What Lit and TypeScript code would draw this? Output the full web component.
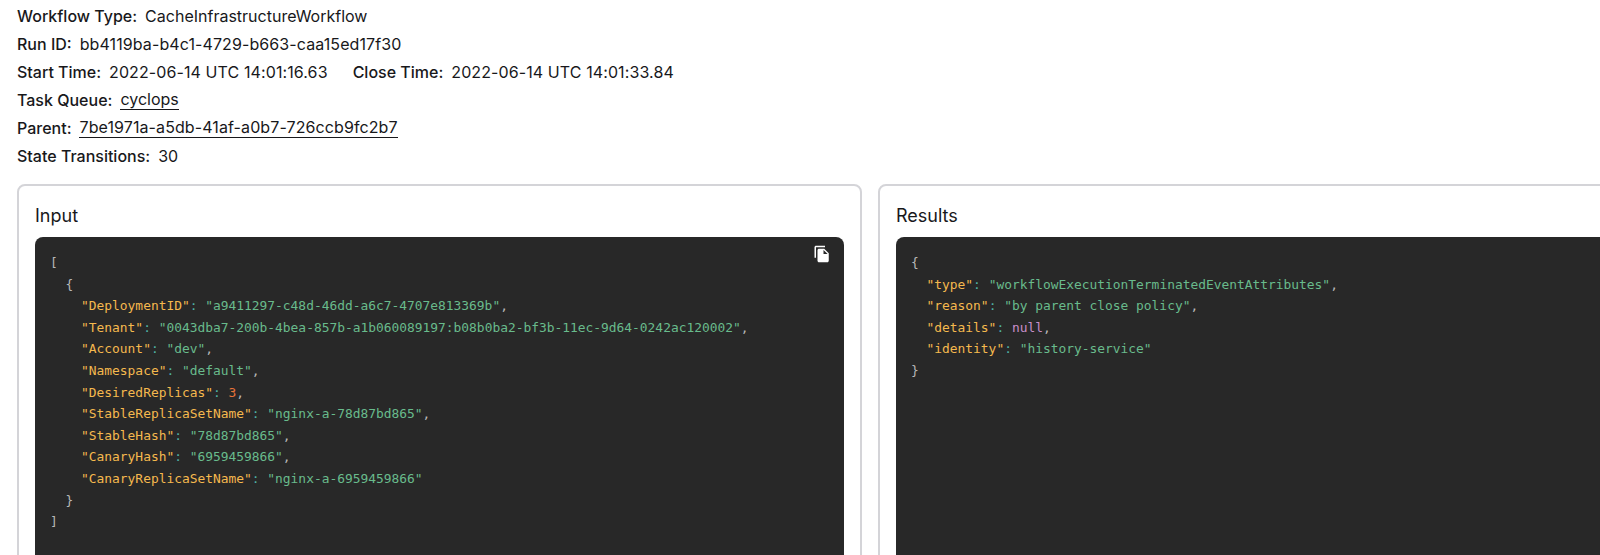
import { LitElement, html, css } from "lit";
import { customElement } from "lit/decorators.js";

type Tok = [string, string];
const k = (s: string): Tok => [s, "key"];
const p = (s: string): Tok => [s, "pun"];
const st = (s: string): Tok => [s, "str"];
const n = (s: string): Tok => [s, "num"];
const nu = (s: string): Tok => [s, "nul"];
const c: Tok = [": ", "col"];
const entry = (key: string, val: Tok, comma = true, indent = "    "): Tok[] => [
  [indent, "pun"],
  k(`"${key}"`),
  c,
  val,
  ...(comma ? [p(",")] : []),
];

const INPUT: Tok[][] = [
  [p("[")],
  [p("  {")],
  entry("DeploymentID", st('"a9411297-c48d-46dd-a6c7-4707e813369b"')),
  entry("Tenant", st('"0043dba7-200b-4bea-857b-a1b060089197:b08b0ba2-bf3b-11ec-9d64-0242ac120002"')),
  entry("Account", st('"dev"')),
  entry("Namespace", st('"default"')),
  entry("DesiredReplicas", n("3")),
  entry("StableReplicaSetName", st('"nginx-a-78d87bd865"')),
  entry("StableHash", st('"78d87bd865"')),
  entry("CanaryHash", st('"6959459866"')),
  entry("CanaryReplicaSetName", st('"nginx-a-6959459866"'), false),
  [p("  }")],
  [p("]")],
];

const RESULT: Tok[][] = [
  [p("{")],
  entry("type", st('"workflowExecutionTerminatedEventAttributes"'), true, "  "),
  entry("reason", st('"by parent close policy"'), true, "  "),
  entry("details", nu("null"), true, "  "),
  entry("identity", st('"history-service"'), false, "  "),
  [p("}")],
];

@customElement("app-root")
export class AppRoot extends LitElement {
  static styles = css`
    :host {
      display: block;
      height: 555px;
      overflow: hidden;
      background: #fff;
      font-family: Inter, "Liberation Sans", sans-serif;
      color: #18181b;
    }
    .page {
      padding: 2px 0 0 17px;
      width: 1706px;
    }
    .row {
      display: flex;
      height: 28px;
      align-items: center;
      font-size: 16px;
      line-height: 24px;
    }
    .label {
      font-weight: 500;
      margin-right: 8px;
    }
    .second {
      margin-left: 25px;
    }
    .digits {
      letter-spacing: 0.1px;
    }
    a {
      color: inherit;
      text-decoration: none;
      border-bottom: 1px solid #18181b;
      line-height: 19px;
    }
    .cards {
      display: grid;
      grid-template-columns: 845px 845px;
      gap: 16px;
      margin-top: 14px;
    }
    .card {
      border: 2px solid #d4d4d8;
      border-radius: 8px;
      padding: 16px;
      height: 500px;
      box-sizing: border-box;
    }
    h2 {
      margin: 0 0 7px;
      font-size: 18px;
      line-height: 28px;
      font-weight: 400;
      color: #18181b;
    }
    .code {
      position: relative;
      background: #282828;
      border-radius: 8px;
      height: 400px;
      padding: 15px 15px;
      box-sizing: border-box;
    }
    pre {
      margin: 0;
      font-family: "DejaVu Sans Mono", monospace;
      font-size: 12.9px;
      line-height: 21.6px;
      color: #c5c5c5;
    }
    .key { color: #f5b94e; }
    .str { color: #68bb8c; }
    .num { color: #e8743a; }
    .nul { color: #c98fca; }
    .col { color: #4fb0a5; }
    .pun { color: #b8b8b8; }
    .copy {
      position: absolute;
      top: 8px;
      right: 13px;
      width: 18px;
      height: 18px;
      fill: #fff;
    }
  `;

  private code(lines: Tok[][]) {
    return html`<pre>${lines.map(
      (l) => html`<div>${l.map((t) => html`<span class=${t[1]}>${t[0]}</span>`)}</div>`
    )}</pre>`;
  }

  render() {
    return html`<div class="page">
      <div class="row"><span class="label">Workflow Type:</span><span>CacheInfrastructureWorkflow</span></div>
      <div class="row"><span class="label">Run ID:</span><span class="digits">bb4119ba-b4c1-4729-b663-caa15ed17f30</span></div>
      <div class="row">
        <span class="label">Start Time:</span><span class="digits">2022-06-14 UTC 14:01:16.63</span>
        <span class="label second">Close Time:</span><span class="digits">2022-06-14 UTC 14:01:33.84</span>
      </div>
      <div class="row"><span class="label">Task Queue:</span><a href="#">cyclops</a></div>
      <div class="row"><span class="label">Parent:</span><a class="digits" href="#">7be1971a-a5db-41af-a0b7-726ccb9fc2b7</a></div>
      <div class="row"><span class="label">State Transitions:</span><span>30</span></div>
      <div class="cards">
        <section class="card">
          <h2>Input</h2>
          <div class="code">
            ${this.code(INPUT)}
            <svg class="copy" viewBox="0 0 24 24" aria-hidden="true">
              <path d="M16 1H4c-1.1 0-2 .9-2 2v14h2V3h12V1zm-1 4l6 6v10c0 1.1-.9 2-2 2H7.99C6.89 23 6 22.1 6 21l.01-14c0-1.1.89-2 1.99-2h7zm-1 7h5.5L14 6.5V12z" />
            </svg>
          </div>
        </section>
        <section class="card">
          <h2>Results</h2>
          <div class="code">${this.code(RESULT)}</div>
        </section>
      </div>
    </div>`;
  }
}
